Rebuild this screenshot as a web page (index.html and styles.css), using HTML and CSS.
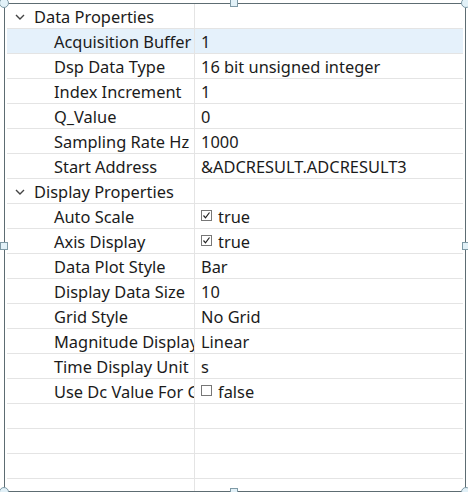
FILE: index.html
```html
<!DOCTYPE html>
<html>
<head>
<meta charset="utf-8">
<title>Properties</title>
<link rel="stylesheet" href="styles.css">
</head>
<body>
<div class="frame">
	<div class="sheet">
		<div class="row group"><div class="name"><svg class="chev" width="10" height="6" viewBox="0 0 10 6"><path d="M1 1 L5 5 L9 1" fill="none" stroke="#444" stroke-width="1.4"/></svg>Data Properties</div><div class="value"></div></div>
		<div class="row sel"><div class="name">Acquisition Buffer Size</div><div class="value">1</div></div>
		<div class="row"><div class="name">Dsp Data Type</div><div class="value">16 bit unsigned integer</div></div>
		<div class="row"><div class="name">Index Increment</div><div class="value">1</div></div>
		<div class="row"><div class="name">Q_Value</div><div class="value">0</div></div>
		<div class="row"><div class="name">Sampling Rate Hz</div><div class="value">1000</div></div>
		<div class="row"><div class="name">Start Address</div><div class="value">&amp;ADCRESULT.ADCRESULT3</div></div>
		<div class="row group"><div class="name"><svg class="chev" width="10" height="6" viewBox="0 0 10 6"><path d="M1 1 L5 5 L9 1" fill="none" stroke="#444" stroke-width="1.4"/></svg>Display Properties</div><div class="value"></div></div>
		<div class="row"><div class="name">Auto Scale</div><div class="value"><svg class="box" width="11" height="11" viewBox="0 0 11 11"><rect x="0.5" y="0.5" width="10" height="10" fill="#fff" stroke="#777"/><path d="M2.5 5.5 L4.5 7.8 L8.5 2.5" fill="none" stroke="#222" stroke-width="1.2"/></svg>true</div></div>
		<div class="row"><div class="name">Axis Display</div><div class="value"><svg class="box" width="11" height="11" viewBox="0 0 11 11"><rect x="0.5" y="0.5" width="10" height="10" fill="#fff" stroke="#777"/><path d="M2.5 5.5 L4.5 7.8 L8.5 2.5" fill="none" stroke="#222" stroke-width="1.2"/></svg>true</div></div>
		<div class="row"><div class="name">Data Plot Style</div><div class="value">Bar</div></div>
		<div class="row"><div class="name">Display Data Size</div><div class="value">10</div></div>
		<div class="row"><div class="name">Grid Style</div><div class="value">No Grid</div></div>
		<div class="row"><div class="name">Magnitude Display Type</div><div class="value">Linear</div></div>
		<div class="row"><div class="name">Time Display Unit</div><div class="value">s</div></div>
		<div class="row"><div class="name">Use Dc Value For Graph</div><div class="value"><svg class="box" width="11" height="11" viewBox="0 0 11 11"><rect x="0.5" y="0.5" width="10" height="10" fill="#fff" stroke="#777"/></svg>false</div></div>
		<div class="row"><div class="name"></div><div class="value"></div></div>
		<div class="row"><div class="name"></div><div class="value"></div></div>
		<div class="row"><div class="name"></div><div class="value"></div></div>
		<div class="row last"><div class="name"></div><div class="value"></div></div>
	</div>
	<div class="handle sq tm"></div>
	<div class="handle sq bm"></div>
	<div class="handle sq lm"></div>
	<div class="handle sq rm"></div>
	<div class="handle ci tl"></div>
	<div class="handle ci tr"></div>
	<div class="handle ci bl"></div>
	<div class="handle ci br"></div>
</div>
</body>
</html>
```

FILE: styles.css
```css
body {
	margin: 0;
	background: #fff;
	font-family: "Noto Sans", "Open Sans", sans-serif;
	font-size: 16.4px;
	color: #1b1b1b;
}
.frame {
	position: relative;
	margin: 3px 0 0 4px;
	width: 460px;
	height: 487px;
	border: 1px solid #5d6c72;
}
.sheet {
	height: 100%;
	overflow: hidden;
}
.row {
	display: grid;
	grid-template-columns: 188px 1fr;
	height: 24px;
	border-bottom: 1px solid #e4e4e4;
	margin-left: 2px;
	margin-right: 2px;
}
.row.last {
	border-bottom: none;
}
.row.sel {
	background: #e5f1fb;
}
.name {
	padding-left: 49px;
	padding-top: 2px;
	white-space: nowrap;
	overflow: hidden;
	line-height: 22px;
	border-right: 1px solid #e4e4e4;
	margin-left: -2px;
}
.group .name {
	padding-left: 10px;
}
.chev {
	margin-right: 9px;
	vertical-align: 3px;
}
.value {
	padding-left: 6px;
	padding-top: 2px;
	white-space: nowrap;
	overflow: hidden;
	line-height: 22px;
}
.box {
	margin-right: 6px;
	vertical-align: 2px;
}
.handle {
	position: absolute;
	background: #e2f1f8;
	border: 1px solid #7f9aa6;
	box-sizing: border-box;
}
.sq {
	width: 8px;
	height: 8px;
}
.ci {
	width: 10px;
	height: 10px;
	border-radius: 50%;
}
.tm { top: -5px; left: 225px; }
.bm { bottom: -5px; left: 225px; }
.lm { left: -5px; top: 238px; }
.rm { right: -5px; top: 238px; }
.tl { top: -6px; left: -6px; }
.tr { top: -6px; right: -6px; }
.bl { bottom: -6px; left: -6px; }
.br { bottom: -6px; right: -6px; }
```
